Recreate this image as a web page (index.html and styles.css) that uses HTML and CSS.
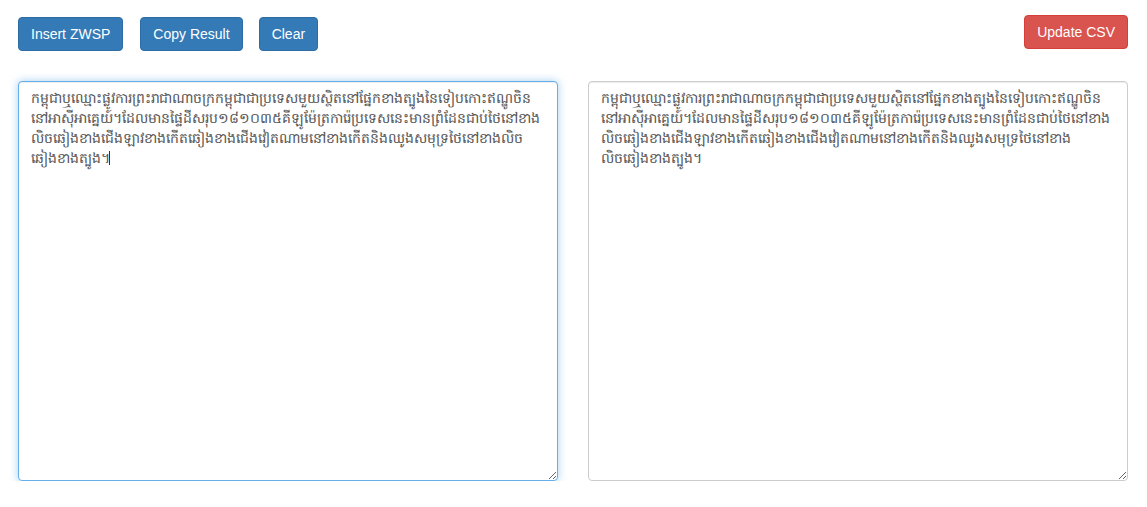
FILE: index.html
```html
<!DOCTYPE html>
<html>
	<head>
		<meta charset="UTF-8">
		<title>ZWSP</title>
		<link rel="stylesheet" href="styles.css">
	</head>
	<body>
		<div class="toolbar">
			<div class="actions">
				<button class="btn btn-primary">Insert ZWSP</button>
				<button class="btn btn-primary">Copy Result</button>
				<button class="btn btn-primary">Clear</button>
			</div>
			<button class="btn btn-danger">Update CSV</button>
		</div>
		<div class="editors">
			<div class="pane">
				<textarea class="box box-focus" spellcheck="false">កម្ពុជាឬឈ្មោះផ្លូវការព្រះរាជាណាចក្រកម្ពុជាជាប្រទេសមួយស្ថិតនៅផ្នែកខាងត្បូងនៃទៀបកោះឥណ្ឌូចិន
នៅអាស៊ីអាគ្នេយ៍។ដែលមានផ្ទៃដីសរុប១៨១០៣៥គីឡូម៉ែត្រការ៉េប្រទេសនេះមានព្រំដែនជាប់ថៃនៅខាង
លិចឆៀងខាងជើងឡាវខាងកើតឆៀងខាងជើងវៀតណាមនៅខាងកើតនិងឈូងសមុទ្រថៃនៅខាងលិច
ឆៀងខាងត្បូង។</textarea>
				<span class="caret"></span>
			</div>
			<div class="pane">
				<textarea class="box" spellcheck="false">កម្ពុជាឬឈ្មោះផ្លូវការព្រះរាជាណាចក្រកម្ពុជាជាប្រទេសមួយស្ថិតនៅផ្នែកខាងត្បូងនៃទៀបកោះឥណ្ឌូចិន
នៅអាស៊ីអាគ្នេយ៍។ដែលមានផ្ទៃដីសរុប១៨១០៣៥គីឡូម៉ែត្រការ៉េប្រទេសនេះមានព្រំដែនជាប់ថៃនៅខាង
លិចឆៀងខាងជើងឡាវខាងកើតឆៀងខាងជើងវៀតណាមនៅខាងកើតនិងឈូងសមុទ្រថៃនៅខាង
លិចឆៀងខាងត្បូង។</textarea>
			</div>
		</div>
	</body>
</html>
```

FILE: styles.css
```css
body{
	margin: 0;
	padding: 15px 19px 0 18px;
	background: #fff;
	font-family: "Liberation Sans", Arial, sans-serif;
	font-size: 14px;
}
.toolbar{
	display: flex;
	justify-content: space-between;
	align-items: flex-start;
	height: 66px;
}
.actions{
	display: flex;
	gap: 17px;
	margin-top: 2px;
}
.actions .btn:last-child{
	margin-left: -1px;
}
.btn{
	height: 34px;
	padding: 6px 12px;
	border: 1px solid transparent;
	border-radius: 4px;
	color: #fff;
	font-family: inherit;
	font-size: 14px;
	line-height: 20px;
}
.btn-primary{
	background: #337ab7;
	border-color: #2e6da4;
}
.btn-danger{
	background: #d9534f;
	border-color: #d43f3a;
}
.editors{
	display: flex;
	justify-content: space-between;
	gap: 30px;
}
.pane{
	position: relative;
	width: 540px;
	height: 400px;
}
.box{
	display: block;
	box-sizing: border-box;
	width: 540px;
	height: 400px;
	padding: 6px 12px;
	border: 1px solid #ccc;
	border-radius: 4px;
	box-shadow: inset 0 1px 1px rgba(0,0,0,.075);
	color: #555;
	font-family: "Liberation Sans", "Noto Sans", sans-serif;
	font-size: 14px;
	line-height: 20px;
	outline: none;
}
.box-focus{
	border-color: #66afe9;
	box-shadow: inset 0 1px 1px rgba(0,0,0,.075), 0 0 8px rgba(102,175,233,.6);
}
.caret{
	position: absolute;
	left: 91px;
	top: 70px;
	width: 1px;
	height: 14px;
	background: #333;
}
```
